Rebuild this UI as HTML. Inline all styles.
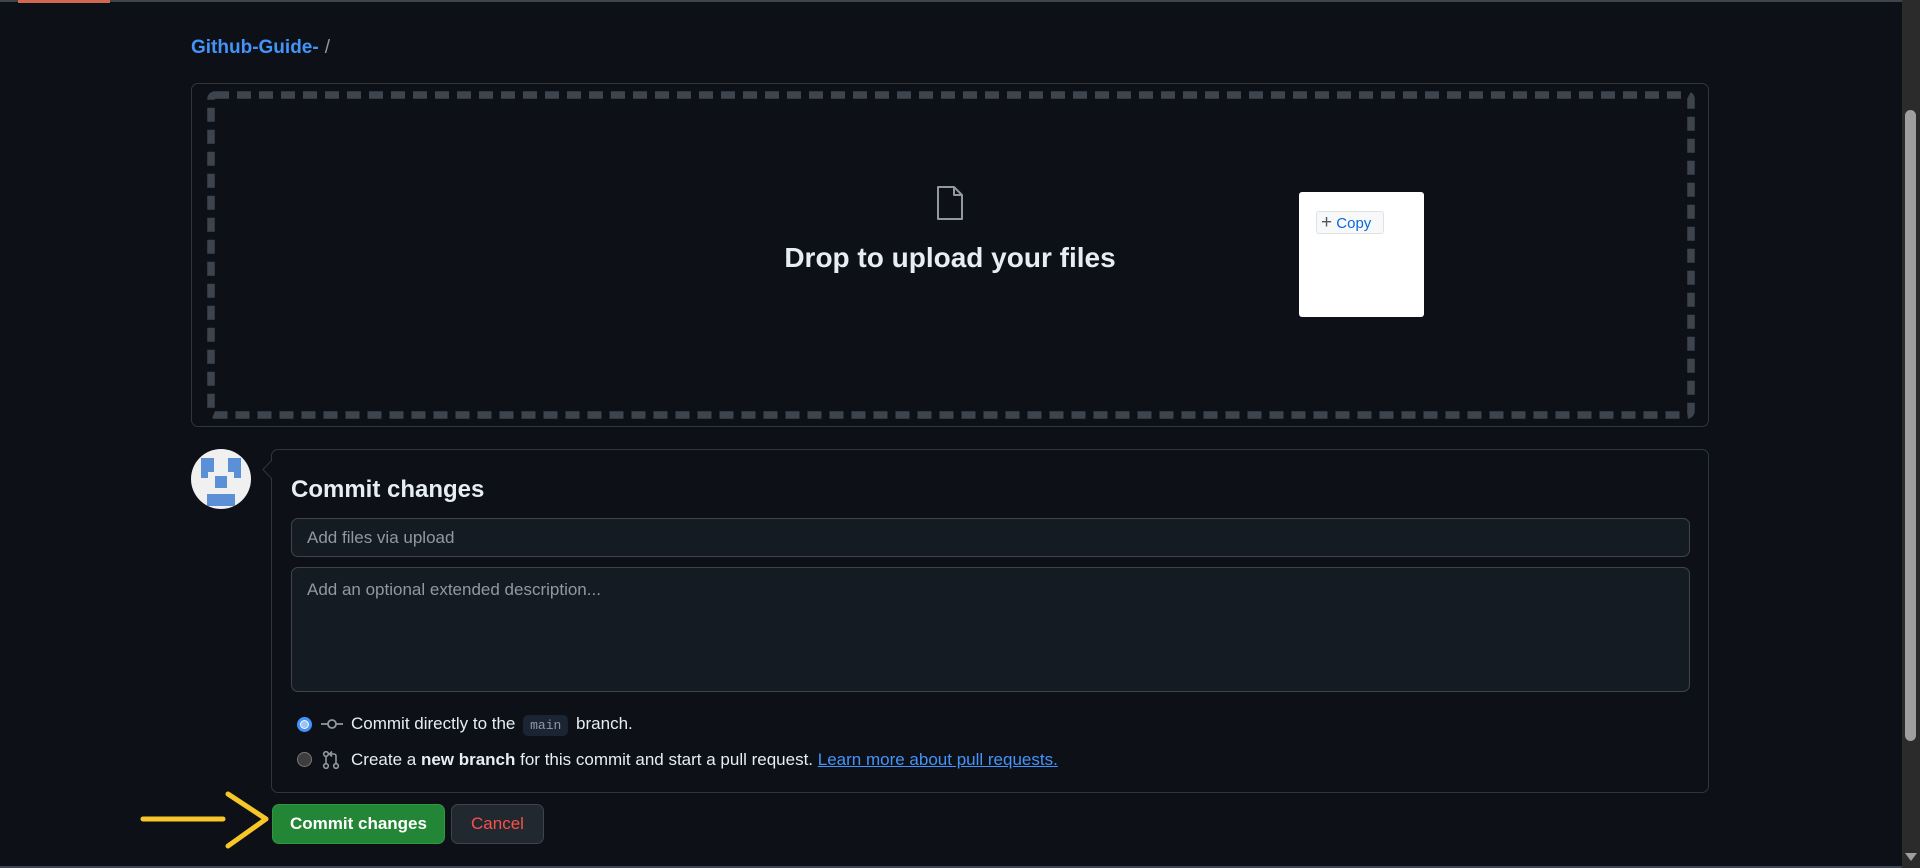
<!DOCTYPE html>
<html><head><meta charset="utf-8"><style>
*{box-sizing:border-box;margin:0;padding:0}
body{width:1920px;height:868px;background:#0d1117;font-family:"Liberation Sans",sans-serif;color:#e6edf3;position:relative;overflow:hidden}
.a{position:absolute}
.topline{left:0;top:0;width:1902px;height:2px;background:#3d444d}
.red{left:18px;top:0;width:92px;height:3px;background:#d2674f}
.crumb{left:191px;top:37px;font-size:19px;font-weight:bold;color:#4493f8}
.crumb span{color:#9198a1;font-weight:normal;margin-left:6px}
.drop{left:191px;top:83px;width:1518px;height:344px;border:1px solid #30363d;border-radius:7px}
.title{left:0;width:1900px;text-align:center}
.white{left:1299px;top:192px;width:125px;height:125px;background:#fff;border-radius:3px}
.copy{left:17px;top:19px;width:68px;height:23px;border:1px solid #dfe2e5;border-radius:3px;background:#f6f8fa;color:#0969da;font-size:15px;line-height:21px;padding-left:4px}
.avatar{left:191px;top:449px;width:60px;height:60px;border-radius:50%;background:#f0f0f0;overflow:hidden}
.box{left:271px;top:449px;width:1438px;height:344px;border:1px solid #30363d;border-radius:7px}
.inp{border:1px solid #3d444d;border-radius:7px;background:#151b23;color:#9198a1;font-size:17px;padding-left:15px}
.txt{font-size:17px;color:#e6edf3}
.radio{width:15px;height:15px;border-radius:50%}
.btn{border-radius:7px;font-size:17px;font-weight:bold;text-align:center;line-height:38px}
</style></head><body>
<div class="a topline"></div><div class="a red"></div>
<div class="a" style="left:0;bottom:0;width:1902px;height:2px;background:#3d444d"></div>
<div class="a crumb">Github-Guide-<span>/</span></div>

<div class="a drop"></div>
<svg class="a" style="left:205px;top:89px" width="1492" height="332"><rect x="6" y="6" width="1480" height="320" rx="4" fill="none" stroke="#3d444d" stroke-width="7.5" stroke-dasharray="14 8"/></svg>
<svg class="a" style="left:934px;top:185px" width="32" height="36" viewBox="0 0 32 36"><path d="M4 2h16l8 8v24H4z M20 2v8h8" fill="none" stroke="#9198a1" stroke-width="2" stroke-linejoin="round"/></svg>
<div class="a title" style="top:242px;left:0;width:1900px;font-size:28px;font-weight:bold">Drop to upload your files</div>
<div class="a white"><div class="a copy"><span style="color:#555;font-size:19px">+</span> Copy</div></div>

<div class="a avatar">
<div class="a" style="left:10px;top:9px;width:13px;height:14px;background:#5b8fd6"></div>
<div class="a" style="left:37px;top:9px;width:13px;height:14px;background:#5b8fd6"></div>
<div class="a" style="left:10px;top:23px;width:7px;height:6px;background:#5b8fd6"></div>
<div class="a" style="left:43px;top:23px;width:7px;height:6px;background:#5b8fd6"></div>
<div class="a" style="left:24px;top:27px;width:12px;height:12px;background:#5b8fd6"></div>
<div class="a" style="left:16px;top:45px;width:28px;height:12px;background:#5b8fd6"></div>
</div>
<div class="a box"></div>
<svg class="a" style="left:262px;top:460px" width="11" height="20"><path d="M10 0L1 9.5 10 19" fill="#0d1117" stroke="#30363d"/></svg>
<div class="a" style="left:291px;top:476px;font-size:24px;font-weight:bold">Commit changes</div>
<div class="a inp" style="left:291px;top:518px;width:1399px;height:39px;line-height:37px">Add files via upload</div>
<div class="a inp" style="left:291px;top:567px;width:1399px;height:125px;padding-top:12px">Add an optional extended description...</div>

<div class="a radio" style="left:297px;top:717px;background:#9cc3f5;border:3px solid #4493f8;box-shadow:inset 0 0 0 1px #fff"></div>
<svg class="a" style="left:321px;top:716px" width="22" height="16"><circle cx="11" cy="8" r="4" fill="none" stroke="#9198a1" stroke-width="1.8"/><path d="M0 8h7M15 8h7" stroke="#9198a1" stroke-width="1.8"/></svg>
<div class="a txt" style="left:351px;top:714px">Commit directly to the <span style="font-family:'Liberation Mono',monospace;font-size:13px;background:#1b2433;color:#9198a1;padding:3px 7px;border-radius:5px;margin:0 3px">main</span> branch.</div>

<div class="a radio" style="left:297px;top:752px;background:#3d3d3d;border:1px solid #777"></div>
<svg class="a" style="left:322px;top:750px" width="18" height="20"><g fill="none" stroke="#9198a1" stroke-width="1.6"><circle cx="4" cy="4" r="2.3"/><circle cx="4" cy="16" r="2.3"/><circle cx="14" cy="16" r="2.3"/><path d="M4 6.5v7M14 13.5V6a2 2 0 0 0-2-2H8M10 1.5L7.5 4 10 6.5"/></g></svg>
<div class="a txt" style="left:351px;top:750px">Create a <b>new branch</b> for this commit and start a pull request. <span style="color:#4493f8;text-decoration:underline">Learn more about pull requests.</span></div>

<div class="a btn" style="left:272px;top:804px;width:173px;height:40px;background:#238636;border:1px solid #2e9a40;color:#fff">Commit changes</div>
<div class="a btn" style="left:451px;top:804px;width:93px;height:40px;background:#212830;border:1px solid #3d444d;color:#f85149;font-weight:normal">Cancel</div>

<svg class="a" style="left:138px;top:788px" width="135" height="64"><g fill="none" stroke="#f6c727" stroke-width="5" stroke-linecap="round" stroke-linejoin="round"><path d="M5 31h80"/><path d="M90 6l38 25-38 27"/></g></svg>

<div class="a" style="left:1902px;top:0;width:18px;height:868px;background:#2b2b2b"></div>
<div class="a" style="left:1905px;top:110px;width:11px;height:631px;background:#9f9f9f;border-radius:6px"></div>
<svg class="a" style="left:1904px;top:852px" width="14" height="10"><path d="M1 1h12L7 9z" fill="#9f9f9f"/></svg>
</body></html>
